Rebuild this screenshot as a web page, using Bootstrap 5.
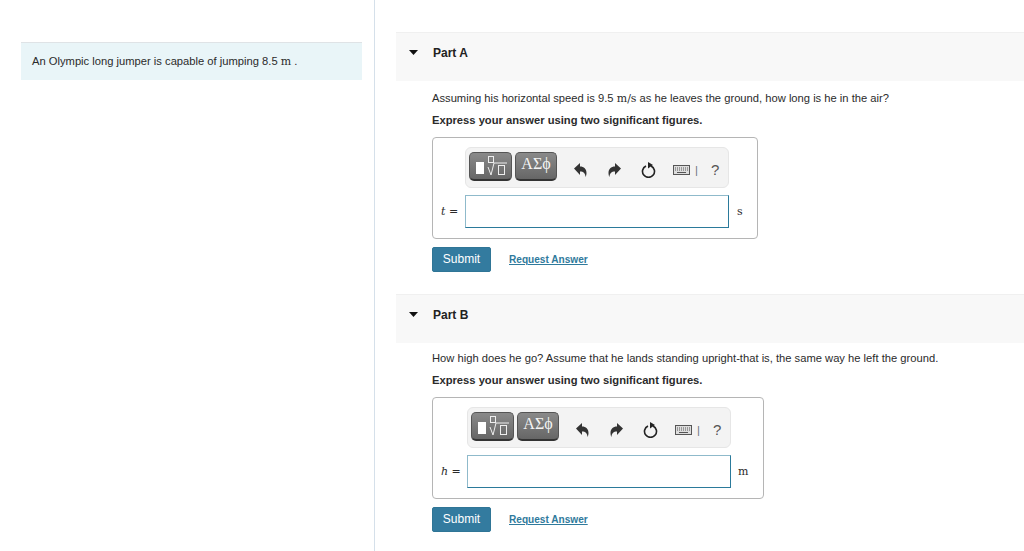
<!DOCTYPE html>
<html lang="en">
<head>
    <meta charset="UTF-8" />
    <title>Long jumper</title>
    <meta name="viewport" content="width=device-width, initial-scale=1.0" />
    <link href="https://cdn.jsdelivr.net/npm/bootstrap@5.3.0/dist/css/bootstrap.min.css" rel="stylesheet">
    <style>
        html, body { height: 551px; overflow: hidden; }
        body {
            background: #fff;
            color: #2b2b2b;
            font-family: "Liberation Sans", Arial, sans-serif;
            font-size: 11.2px;
            line-height: 16px;
        }
        .side-col {
            width: 375px;
            height: 551px;
            flex: none;
            padding: 42px 12px 0 21px;
            border-right: 1px solid #d5e0ea;
        }
        .intro-box {
            height: 38px;
            padding: 10px 11px;
            background: #e9f5f8;
            border-top: 1px solid #dfe3e6;
        }
        .math { font-family: "DejaVu Serif", "Liberation Serif", serif; font-size: 11px; }
        .math-i { font-style: italic; }
        .main-col { padding: 32px 0 0 21px; min-width: 0; }
        .part-head {
            height: 49px;
            padding: 12px 12px 0 13px;
            background: #f8f8f8;
            border-top: 1px solid #f0f0f0;
            font-size: 12px;
            font-weight: 700;
            color: #222;
            gap: 15px;
        }
        .caret-down { width: 9px; height: 5px; margin-top: 5px; flex: none; }
        .part-body { padding: 9px 0 0 36px; }
        .part-body-b { padding-top: 7px; }
        .q-text { height: 16px; margin: 0 0 6px; white-space: nowrap; }
        .q-strong { height: 16px; margin: 0 0 9px; font-weight: 700; white-space: nowrap; }
        .answer-box {
            height: 102px;
            padding: 9px 0 0 8px;
            border: 1px solid #b5b5b5;
            border-radius: 4px;
        }
        .box-a { width: 326px; }
        .box-b { width: 332px; }
        .var-label { width: 24px; flex: none; padding-right: 7px; text-align: right; white-space: nowrap; }
        .var-wide { width: 26px; }
        .tool-row { margin-left: 24px; width: 264px; height: 41px; padding: 4px 3px; background: #f3f3f3; border: 1px solid #e6e6e6; border-radius: 6px; }
        .box-b .tool-row { margin-left: 26px; }
        .tool-btn {
            width: 42px;
            height: 29px;
            padding: 0 0 5px;
            flex: none;
            color: #f4f4f4;
            background: linear-gradient(#8a8a8a, #666);
            border: 1px solid #555;
            border-bottom: 2px solid #333;
            border-radius: 5px;
            font-family: "Liberation Serif", serif;
            font-size: 16px;
            line-height: 20px;
        }
        .tool-btn-svg { width: 43px; padding: 0; margin-right: 3px; }
        .tool-btn-svg svg { display: block; }
        .tool-icons { margin: 10px 0 0 16px; height: 16px; flex: 1; }
        .ic-redo { margin-left: 21px; }
        .ic-reload { margin-left: 19px; }
        .ic-keys { margin-left: 17px; }
        .ic-bar { margin-left: 5px; }
        .help-mark { font-size: 15px; color: #555; margin-left: 13px; }
        .input-row { margin-top: 7px; height: 33px; }
        .answer-input { width: 264px; height: 33px; flex: none; border: 1px solid #2b7a9b; border-left-color: #8fbacb; border-top-color: #8fbacb; border-radius: 0; background: #fff; }
        .unit-label { margin-left: 8px; }
        .unit-wide { margin-left: 7px; }
        .act-row { margin-top: 8px; height: 25px; }
        .submit-btn {
            width: 59px;
            height: 25px;
            padding: 0;
            font-size: 12px;
            line-height: 23px;
            color: #fff;
            background: #337b9f;
            border: 1px solid #2f7596;
            border-radius: 2px;
        }
        .req-link { margin-left: 18px; font-size: 10.1px; font-weight: 700; color: #2f7a9c; text-decoration: underline; }
        .part-gap { margin-top: 22px; }
    </style>
</head>
<body class="d-flex">

<div class="side-col">
    <div class="intro-box">An Olympic long jumper is capable of jumping 8.5 <span class="math">m</span> .</div>
</div>

<div class="main-col flex-grow-1">
    <!-- Part A -->
    <div class="part-head d-flex align-items-start">
        <svg class="caret-down" viewBox="0 0 9 5"><path d="M0 0h9L4.500 5z" fill="#111"/></svg>
        <span>Part A</span>
    </div>
    <div class="part-body">
        <p class="q-text">Assuming his horizontal speed is 9.5 <span class="math">m/s</span> as he leaves the ground, how long is he in the air?</p>
        <p class="q-strong">Express your answer using two significant figures.</p>
        <div class="answer-box box-a">
            <div class="tool-row d-flex align-items-start">
                <button class="tool-btn tool-btn-svg" type="button" aria-label="templates">
                    <svg width="41" height="26" viewBox="0 0 41 26"><rect x="6" y="9" width="8" height="12" fill="#fff"/><rect x="18.500" y="3.500" width="5" height="6" fill="none" stroke="#eee"/><path d="M18 14l3 8 3-12h13" fill="none" stroke="#eee"/><rect x="28.500" y="12.500" width="6" height="9" fill="none" stroke="#eee"/></svg>
                </button>
                <button class="tool-btn" type="button">ΑΣϕ</button>
                <div class="tool-icons d-flex align-items-center">
                    <svg width="14" height="14" viewBox="0 0 14 14"><path d="M1 5.500L7 0v3.500c4 0 6.500 2.500 6.500 6.500 0 1.500-.4 3-1 4 0-3.500-2-5.500-5.500-5.500V12z" fill="#333"/></svg>
                    <svg class="ic-redo" width="14" height="14" viewBox="0 0 14 14"><path d="M13 5.500L7 0v3.500C3 3.500.500 6 .500 10c0 1.500.4 3 1 4 0-3.500 2-5.500 5.500-5.500V12z" fill="#333"/></svg>
                    <svg class="ic-reload" width="15" height="16" viewBox="0 0 15 16"><path d="M10 3.900a6 6 0 1 1-5 0" fill="none" stroke="#222" stroke-width="1.600"/><path d="M7 0v6.500L12 3z" fill="#222"/></svg>
                    <svg class="ic-keys" width="17" height="10" viewBox="0 0 17 10"><rect x=".5" y=".5" width="16" height="9" fill="#ddd" stroke="#555"/><path d="M2 3h13M2 5h13" stroke="#555" stroke-dasharray="1 1"/><path d="M4 7.500h9" stroke="#555"/></svg>
                    <span class="ic-bar text-secondary">|</span>
                    <span class="help-mark">?</span>
                </div>
            </div>
            <div class="input-row d-flex align-items-center">
                <span class="var-label math"><span class="math-i">t</span> =</span>
                <div class="answer-input"></div>
                <span class="unit-label math">s</span>
            </div>
        </div>
        <div class="act-row d-flex align-items-center">
            <button class="submit-btn" type="button">Submit</button>
            <a class="req-link" href="#">Request Answer</a>
        </div>
    </div>

    <!-- Part B -->
    <div class="part-head part-gap d-flex align-items-start">
        <svg class="caret-down" viewBox="0 0 9 5"><path d="M0 0h9L4.500 5z" fill="#111"/></svg>
        <span>Part B</span>
    </div>
    <div class="part-body part-body-b">
        <p class="q-text">How high does he go? Assume that he lands standing upright-that is, the same way he left the ground.</p>
        <p class="q-strong">Express your answer using two significant figures.</p>
        <div class="answer-box box-b">
            <div class="tool-row d-flex align-items-start">
                <button class="tool-btn tool-btn-svg" type="button" aria-label="templates">
                    <svg width="41" height="26" viewBox="0 0 41 26"><rect x="6" y="9" width="8" height="12" fill="#fff"/><rect x="18.500" y="3.500" width="5" height="6" fill="none" stroke="#eee"/><path d="M18 14l3 8 3-12h13" fill="none" stroke="#eee"/><rect x="28.500" y="12.500" width="6" height="9" fill="none" stroke="#eee"/></svg>
                </button>
                <button class="tool-btn" type="button">ΑΣϕ</button>
                <div class="tool-icons d-flex align-items-center">
                    <svg width="14" height="14" viewBox="0 0 14 14"><path d="M1 5.500L7 0v3.500c4 0 6.500 2.500 6.500 6.500 0 1.500-.4 3-1 4 0-3.500-2-5.500-5.500-5.500V12z" fill="#333"/></svg>
                    <svg class="ic-redo" width="14" height="14" viewBox="0 0 14 14"><path d="M13 5.500L7 0v3.500C3 3.500.500 6 .500 10c0 1.500.4 3 1 4 0-3.500 2-5.500 5.500-5.500V12z" fill="#333"/></svg>
                    <svg class="ic-reload" width="15" height="16" viewBox="0 0 15 16"><path d="M10 3.900a6 6 0 1 1-5 0" fill="none" stroke="#222" stroke-width="1.600"/><path d="M7 0v6.500L12 3z" fill="#222"/></svg>
                    <svg class="ic-keys" width="17" height="10" viewBox="0 0 17 10"><rect x=".5" y=".5" width="16" height="9" fill="#ddd" stroke="#555"/><path d="M2 3h13M2 5h13" stroke="#555" stroke-dasharray="1 1"/><path d="M4 7.500h9" stroke="#555"/></svg>
                    <span class="ic-bar text-secondary">|</span>
                    <span class="help-mark">?</span>
                </div>
            </div>
            <div class="input-row d-flex align-items-center">
                <span class="var-label var-wide math"><span class="math-i">h</span> =</span>
                <div class="answer-input"></div>
                <span class="unit-label unit-wide math">m</span>
            </div>
        </div>
        <div class="act-row d-flex align-items-center">
            <button class="submit-btn" type="button">Submit</button>
            <a class="req-link" href="#">Request Answer</a>
        </div>
    </div>
</div>

</body>
</html>
